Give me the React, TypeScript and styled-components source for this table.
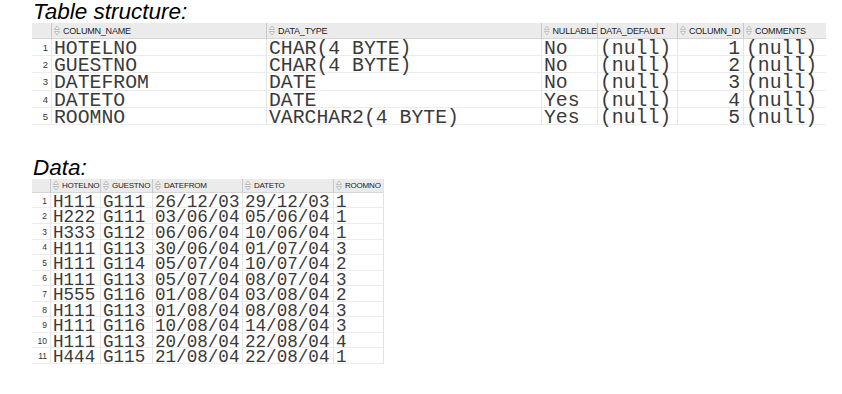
import styled, { createGlobalStyle } from 'styled-components';

const GlobalStyle = createGlobalStyle`
  body {
    margin: 0;
    background: #ffffff;
  }
`;

type Column = { name: string; width: number; icon?: boolean; align?: 'left' | 'right' };

type TableProps = {
  columns: Column[];
  rows: string[][];
  numWidth: number;
  headHeight: number;
  rowHeight: number;
  fontSize: number;
  headSize: number;
  numSize: number;
};

const structureColumns: Column[] = [
  { name: 'COLUMN_NAME', width: 215, icon: true },
  { name: 'DATA_TYPE', width: 275, icon: true },
  { name: 'NULLABLE', width: 56, icon: true },
  { name: 'DATA_DEFAULT', width: 80 },
  { name: 'COLUMN_ID', width: 66, icon: true, align: 'right' },
  { name: 'COMMENTS', width: 83, icon: true },
];

const structureRows = [
  ['HOTELNO', 'CHAR(4 BYTE)', 'No', '(null)', '1', '(null)'],
  ['GUESTNO', 'CHAR(4 BYTE)', 'No', '(null)', '2', '(null)'],
  ['DATEFROM', 'DATE', 'No', '(null)', '3', '(null)'],
  ['DATETO', 'DATE', 'Yes', '(null)', '4', '(null)'],
  ['ROOMNO', 'VARCHAR2(4 BYTE)', 'Yes', '(null)', '5', '(null)'],
];

const dataColumns: Column[] = [
  { name: 'HOTELNO', width: 50, icon: true },
  { name: 'GUESTNO', width: 52, icon: true },
  { name: 'DATEFROM', width: 90, icon: true },
  { name: 'DATETO', width: 91, icon: true },
  { name: 'ROOMNO', width: 50, icon: true },
];

const dataRows = [
  ['H111', 'G111', '26/12/03', '29/12/03', '1'],
  ['H222', 'G111', '03/06/04', '05/06/04', '1'],
  ['H333', 'G112', '06/06/04', '10/06/04', '1'],
  ['H111', 'G113', '30/06/04', '01/07/04', '3'],
  ['H111', 'G114', '05/07/04', '10/07/04', '2'],
  ['H111', 'G113', '05/07/04', '08/07/04', '3'],
  ['H555', 'G116', '01/08/04', '03/08/04', '2'],
  ['H111', 'G113', '01/08/04', '08/08/04', '3'],
  ['H111', 'G116', '10/08/04', '14/08/04', '3'],
  ['H111', 'G113', '20/08/04', '22/08/04', '4'],
  ['H444', 'G115', '21/08/04', '22/08/04', '1'],
];

const SortIcon = () => (
  <svg width="6" height="11" viewBox="0 0 6 11">
    <path d="M0.5 4.5 L3 1 L5.5 4.5 Z" fill="#f6f6f6" stroke="#b0b0b0" strokeWidth="0.8" />
    <path d="M0.5 6.5 L3 10 L5.5 6.5 Z" fill="#f6f6f6" stroke="#b0b0b0" strokeWidth="0.8" />
  </svg>
);

const Grid = ({ columns, rows, numWidth, headHeight, rowHeight, fontSize, headSize, numSize }: TableProps) => {
  const template = [numWidth, ...columns.map((c) => c.width)].map((w) => `${w}px`).join(' ');
  return (
    <TableGrid $template={template}>
      <HeadCell $height={headHeight} />
      {columns.map((c) => (
        <HeadCell key={c.name} $height={headHeight} $size={headSize}>
          {c.icon && <SortIcon />}
          <span>{c.name}</span>
        </HeadCell>
      ))}
      {rows.map((row, i) => (
        <Row key={i}>
          <NumCell $height={rowHeight} $size={numSize}>{i + 1}</NumCell>
          {row.map((v, j) => (
            <Cell key={j} $height={rowHeight} $size={fontSize} $align={columns[j].align}>
              {v}
            </Cell>
          ))}
        </Row>
      ))}
    </TableGrid>
  );
};

export default function App() {
  return (
    <>
      <GlobalStyle />
      <Page>
        <Title>Table structure:</Title>
        <Grid
          columns={structureColumns}
          rows={structureRows}
          numWidth={19}
          headHeight={16}
          rowHeight={17.2}
          fontSize={19.8}
          headSize={9}
          numSize={9.5}
        />
        <Title $gap={31}>Data:</Title>
        <DataWrap>
          <Grid
            columns={dataColumns}
            rows={dataRows}
            numWidth={18}
            headHeight={14}
            rowHeight={15.55}
            fontSize={17.6}
            headSize={8}
            numSize={8.5}
          />
        </DataWrap>
      </Page>
    </>
  );
}

const Page = styled.div`
  padding: 0 0 0 32px;
  display: flex;
  flex-direction: column;
  align-items: flex-start;
`;

const Title = styled.div<{ $gap?: number }>`
  font-family: 'Liberation Sans', Arial, sans-serif;
  font-style: italic;
  font-size: 22.5px;
  line-height: 23px;
  color: #000;
  margin-top: ${(p) => p.$gap ?? 0}px;
  padding-left: 1px;
`;

const DataWrap = styled.div`
  border-right: 1px solid #e2e2e2;
`;

const TableGrid = styled.div<{ $template: string }>`
  display: grid;
  grid-template-columns: ${(p) => p.$template};
`;

const Row = styled.div`
  display: contents;
`;

const HeadCell = styled.div<{ $height: number; $size?: number }>`
  box-sizing: border-box;
  height: ${(p) => p.$height}px;
  background: #ebebeb;
  border-left: 1px solid #c9c9c9;
  border-bottom: 1px solid #d6d6d6;
  display: flex;
  align-items: center;
  gap: 3px;
  padding-left: 2px;
  overflow: hidden;
  white-space: nowrap;
  font-family: 'Liberation Sans', Arial, sans-serif;
  font-size: ${(p) => p.$size ?? 9}px;
  letter-spacing: -0.2px;
  color: #222;

  &:first-child {
    border-left: none;
  }
`;

const NumCell = styled.div<{ $height: number; $size: number }>`
  box-sizing: border-box;
  height: ${(p) => p.$height}px;
  border-bottom: 1px solid #ececec;
  display: flex;
  align-items: center;
  justify-content: flex-end;
  padding-right: 3px;
  padding-top: 1px;
  font-family: 'Liberation Sans', Arial, sans-serif;
  font-size: ${(p) => p.$size}px;
  color: #333;
`;

const Cell = styled.div<{ $height: number; $size: number; $align?: 'left' | 'right' }>`
  box-sizing: border-box;
  height: ${(p) => p.$height}px;
  line-height: ${(p) => p.$height}px;
  padding: 2px 3px 0 2px;
  border-left: 1px solid #e6e6e6;
  border-bottom: 1px solid #ececec;
  white-space: pre;
  overflow: visible;
  text-align: ${(p) => p.$align ?? 'left'};
  font-family: 'Courier New', 'Nimbus Mono PS', 'Nimbus Mono L', FreeMono, 'Liberation Mono', monospace;
  font-size: ${(p) => p.$size}px;
  color: #3a3a3a;
`;
